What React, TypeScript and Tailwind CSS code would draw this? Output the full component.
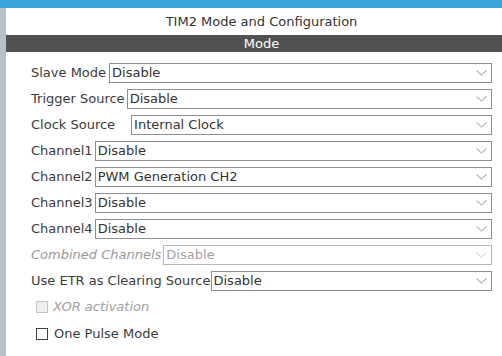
import React from 'react';

const font = { fontFamily: '"DejaVu Sans", sans-serif' };

function Chevron({ disabled }: { disabled?: boolean }) {
  return (
    <svg width="11" height="6" viewBox="0 0 11 6" className="shrink-0">
      <path d="M0.5 0.5 L5.5 5 L10.5 0.5" fill="none" stroke={disabled ? '#c8c8c8' : '#8e8e8e'} strokeWidth="1" />
    </svg>
  );
}

function Row({ label, value, gap = 'ml-[2px]', disabled, italic }: { label: string; value: string; gap?: string; disabled?: boolean; italic?: boolean }) {
  return (
    <div className="flex items-center h-[20px]">
      <span className={`whitespace-nowrap text-[13px] ${italic ? 'italic' : ''} ${disabled ? 'text-[#9a9a9a]' : 'text-[#3b3b3b]'}`}>{label}</span>
      <div
        className={`${gap} flex-1 h-[20px] flex items-center justify-between pl-[2px] pr-[4px] border ${
          disabled ? 'border-[#b4b6b8] text-[#a3a3a3]' : 'border-[#8c9093] text-[#333333]'
        }`}
      >
        <span className="text-[13px] whitespace-nowrap">{value}</span>
        <Chevron disabled={disabled} />
      </div>
    </div>
  );
}

export default function App() {
  return (
    <div className="w-[502px] h-[356px] bg-white overflow-hidden flex flex-col" style={font}>
      <div className="h-[8px] bg-[#38a7dd] shrink-0" />
      <div className="flex flex-1">
        <div className="w-[6px] bg-[#b7c1c7] shrink-0" />
        <div className="flex-1 flex flex-col">
          <div className="h-[27px] flex items-center justify-center pl-[15px] text-[13px] text-[#333333]">
            TIM2 Mode and Configuration
          </div>
          <div className="h-[17px] flex items-center justify-center pl-[15px] bg-[#515151] text-[13px] text-white">
            Mode
          </div>
          <div className="flex flex-col gap-[6px] pl-[25px] pr-[10px] pt-[10px] mt-[1px]">
            <Row label="Slave Mode" value="Disable" gap="ml-[3px]" />
            <Row label="Trigger Source" value="Disable" />
            <Row label="Clock Source" value="Internal Clock" gap="ml-[16px]" />
            <Row label="Channel1" value="Disable" />
            <Row label="Channel2" value="PWM Generation CH2" />
            <Row label="Channel3" value="Disable" />
            <Row label="Channel4" value="Disable" />
            <Row label="Combined Channels" value="Disable" disabled italic />
            <Row label="Use ETR as Clearing Source" value="Disable" gap="ml-0" />
          </div>
          <div className="flex flex-col pl-[30px] pt-[10px] gap-[15px]">
            <div className="flex items-center h-[12px] gap-[5px]">
              <span className="w-[12px] h-[12px] border border-[#c4c4c4] bg-[#eeeeee]" />
              <span className="text-[13px] italic text-[#a0a0a0]">XOR activation</span>
            </div>
            <div className="flex items-center h-[12px] gap-[6px]">
              <span className="w-[12px] h-[12px] border border-[#444444] bg-white" />
              <span className="text-[13px] text-[#3b3b3b]">One Pulse Mode</span>
            </div>
          </div>
        </div>
      </div>
    </div>
  );
}
